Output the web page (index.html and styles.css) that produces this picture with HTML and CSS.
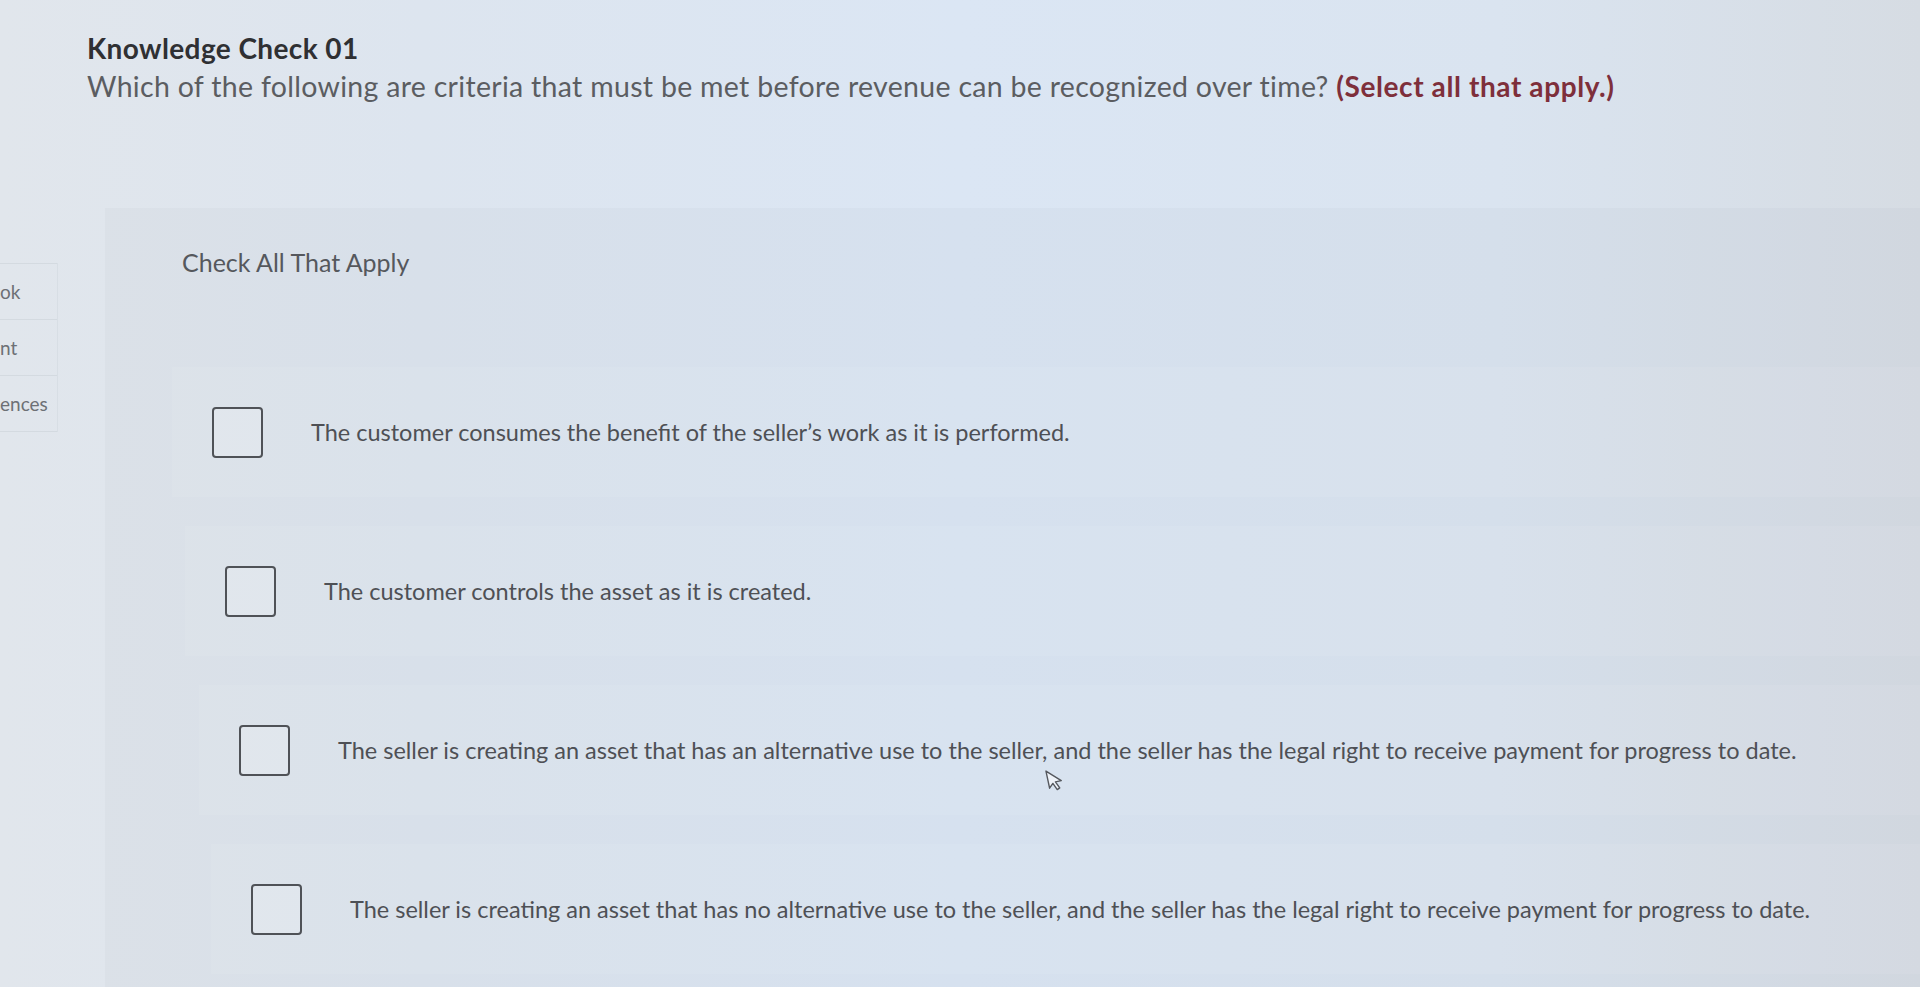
FILE: index.html
```html
<!DOCTYPE html>
<html lang="en">
<head>
<meta charset="utf-8">
<title>Knowledge Check 01</title>
<link rel="stylesheet" href="styles.css">
</head>
<body>
<div class="screen">
  <header class="header">
    <h1 class="title">Knowledge Check 01</h1>
    <p class="question">Which of the following are criteria that must be met before revenue can be recognized over time? <strong class="select-all">(Select all that apply.)</strong></p>
  </header>
  <div class="content">
    <nav class="sidebar">
      <div class="side-item">ok</div>
      <div class="side-item">nt</div>
      <div class="side-item">ences</div>
    </nav>
    <section class="panel">
      <h2 class="panel-title">Check All That Apply</h2>
      <div class="options">
        <label class="option"><span class="box"></span><span class="option-text">The customer consumes the benefit of the seller’s work as it is performed.</span></label>
        <label class="option"><span class="box"></span><span class="option-text">The customer controls the asset as it is created.</span></label>
        <label class="option"><span class="box"></span><span class="option-text">The seller is creating an asset that has an alternative use to the seller, and the seller has the legal right to receive payment for progress to date.</span></label>
        <label class="option"><span class="box"></span><span class="option-text">The seller is creating an asset that has no alternative use to the seller, and the seller has the legal right to receive payment for progress to date.</span></label>
      </div>
    </section>
  </div>
  <svg class="cursor" viewBox="0 0 17 24" width="17" height="24" aria-hidden="true">
    <path d="M2 1.5 L2 19 L6.2 15 L9.2 22 L12 20.8 L9 14 L15 14 Z" fill="#eef2f8" stroke="#55585e" stroke-width="1.4" stroke-linejoin="round"/>
  </svg>
</div>
</body>
</html>
```

FILE: styles.css
```css
html, body {
  margin: 0;
  padding: 0;
}

body {
  width: 1920px;
  height: 987px;
  overflow: hidden;
  font-family: Lato, "Liberation Sans", Arial, sans-serif;
  background: linear-gradient(90deg, #e1e6ec 0%, #dde5ef 22%, #dbe6f4 50%, #dae4f0 78%, #d6dce3 100%);
}

.screen {
  position: relative;
  width: 1920px;
  height: 987px;
}

.header {
  box-sizing: border-box;
  height: 208px;
  padding: 31px 0 0 87px;
}

.title {
  margin: 0;
  font-size: 28px;
  line-height: 35px;
  font-weight: 700;
  letter-spacing: 0.4px;
  color: #2f3033;
}

.question {
  margin: 3px 0 0;
  font-size: 28.5px;
  line-height: 35px;
  font-weight: 400;
  letter-spacing: 0.3px;
  color: #5b5d61;
}

.select-all {
  font-weight: 700;
  color: #7e2f3b;
  font-size: 28px;
  letter-spacing: 0.6px;
}

.content {
  display: flex;
  align-items: flex-start;
}

.sidebar {
  width: 57px;
  margin-top: 55px;
  border-right: 1px solid rgba(120, 130, 140, 0.08);
}

.side-item {
  height: 55px;
  line-height: 55px;
  border-top: 1px solid rgba(120, 130, 140, 0.12);
  font-size: 19px;
  color: #6d7075;
  white-space: nowrap;
}

.side-item:last-child {
  border-bottom: 1px solid rgba(120, 130, 140, 0.12);
}

.panel {
  flex: 1;
  box-sizing: border-box;
  min-height: 779px;
  margin-left: 47px;
  padding: 38px 0 0 67px;
  background: rgba(110, 120, 135, 0.045);
}

.panel-title {
  margin: 0 0 0 10px;
  font-size: 25px;
  line-height: 32px;
  font-weight: 400;
  color: #55585d;
}

.options {
  margin-top: 89px;
  display: flex;
  flex-direction: column;
  gap: 29px;
}

.option {
  box-sizing: border-box;
  height: 130px;
  display: flex;
  align-items: center;
  gap: 48px;
  padding: 0 40px;
  background: rgba(255, 255, 255, 0.07);
}

.option:nth-child(2) { margin-left: 13px; }
.option:nth-child(3) { margin-left: 27px; }
.option:nth-child(4) { margin-left: 39px; }

.box {
  flex: none;
  box-sizing: border-box;
  width: 51px;
  height: 51px;
  border: 2px solid #4f5257;
  border-radius: 4px;
  background: rgba(255, 255, 255, 0.15);
}

.option-text {
  font-size: 23.5px;
  line-height: 30px;
  color: #4e5055;
  white-space: nowrap;
}

.cursor {
  position: absolute;
  left: 1046px;
  top: 768px;
  transform: rotate(-12deg);
}
```
